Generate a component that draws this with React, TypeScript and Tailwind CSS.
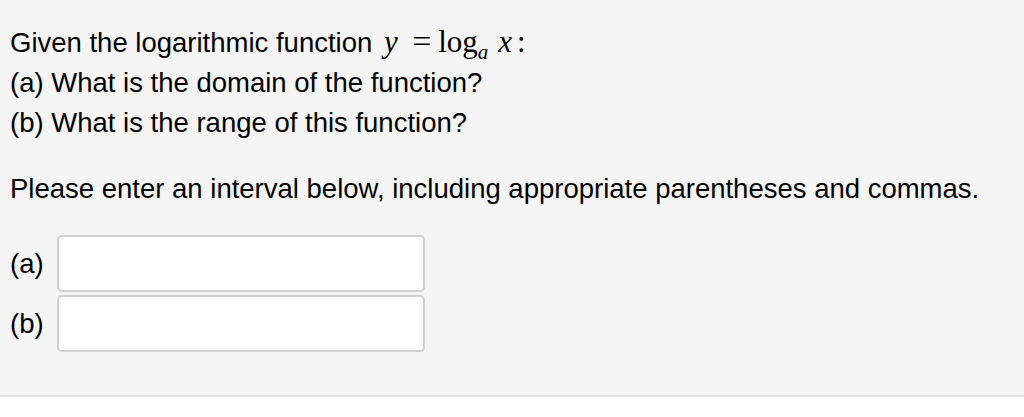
export default function App() {
  const serif = { fontFamily: '"Liberation Serif", "DejaVu Serif", serif' };
  return (
    <div className="w-[1024px] h-[417px] bg-white" style={{ fontFamily: '"Liberation Sans", Arial, sans-serif' }}>
      <div className="bg-[#f5f5f5] h-[397px] border-b-2 border-[#e3e3e3] pl-[10px] pt-[22px] text-[27.5px] text-black leading-[40px]">
        <div>
          Given the logarithmic function{" "}
          <span style={serif} className="text-[31px]">
            <i className="ml-[4px]">y</i>
            <span className="ml-[15px] mr-[8px] inline-block scale-x-110">=</span>
            <span>log</span>
            <sub className="text-[21px] italic relative top-[7px] bottom-auto">a</sub>
            <i className="ml-[10px]">x</i>
            <span className="ml-[5px]">:</span>
          </span>
        </div>
        <div>(a) What is the domain of the function?</div>
        <div>(b) What is the range of this function?</div>
        <div className="mt-[26px]">Please enter an interval below, including appropriate parentheses and commas.</div>
        <div className="mt-[26px] flex flex-col gap-[3px]">
          <div className="flex items-center">
            <span className="w-[47px]">(a)</span>
            <div className="w-[368px] h-[57px] bg-white border-2 border-[#d0d0d0] rounded-[5px]" />
          </div>
          <div className="flex items-center">
            <span className="w-[47px]">(b)</span>
            <div className="w-[368px] h-[57px] bg-white border-2 border-[#d0d0d0] rounded-[5px]" />
          </div>
        </div>
      </div>
    </div>
  );
}
